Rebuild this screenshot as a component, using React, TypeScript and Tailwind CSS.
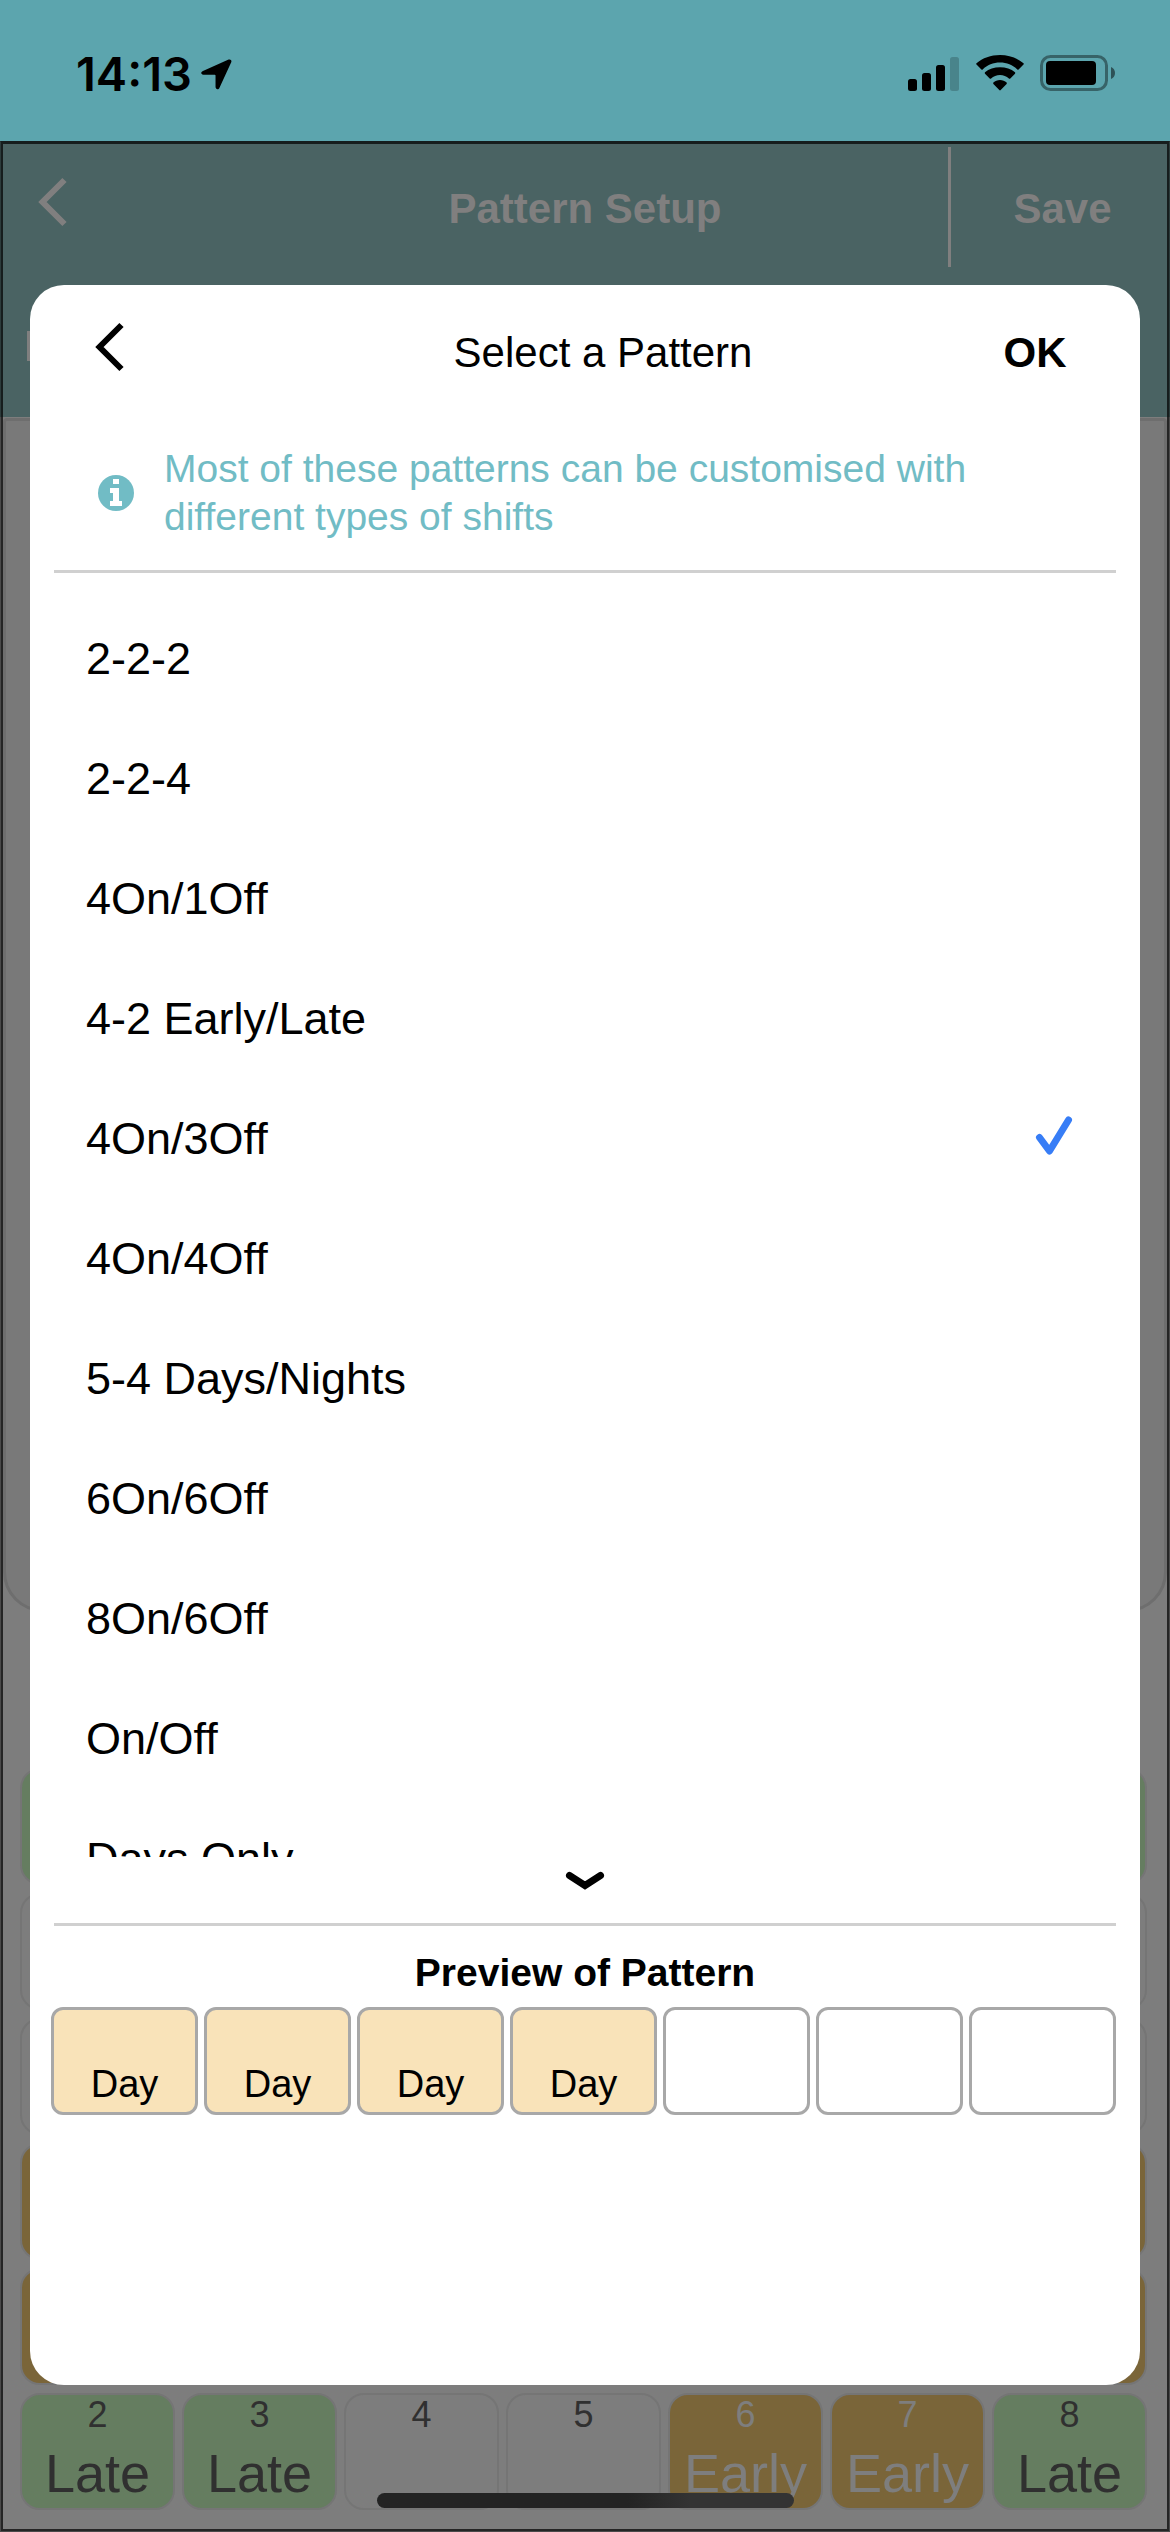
import { useState } from 'react';

const patterns = [
  '2-2-2',
  '2-2-4',
  '4On/1Off',
  '4-2 Early/Late',
  '4On/3Off',
  '4On/4Off',
  '5-4 Days/Nights',
  '6On/6Off',
  '8On/6Off',
  'On/Off',
  'Days Only',
];

const preview = ['Day', 'Day', 'Day', 'Day', '', '', ''];

type Shift = 'late' | 'early' | 'off';

const shiftTone: Record<Shift, string> = {
  late: 'bg-[#657d60] text-[#303030]',
  early: 'bg-[#7a6539] text-[#7e7e7e]',
  off: 'text-[#303030]',
};

const shiftLabel: Record<Shift, string> = { late: 'Late', early: 'Early', off: '' };

const pastWeeks: Shift[] = ['late', 'off', 'off', 'early', 'early'];

const currentWeek: { day: number; shift: Shift }[] = [
  { day: 2, shift: 'late' },
  { day: 3, shift: 'late' },
  { day: 4, shift: 'off' },
  { day: 5, shift: 'off' },
  { day: 6, shift: 'early' },
  { day: 7, shift: 'early' },
  { day: 8, shift: 'late' },
];

const cellBase = 'h-[117px] rounded-[20px] border-2 border-[#757575] text-center';

function BackIcon() {
  return (
    <svg className="h-[50px] w-[30px]" viewBox="0 0 30 50" fill="none" stroke="currentColor" strokeWidth="6">
      <path d="M26.500 3 4.500 25l22 22" />
    </svg>
  );
}

function StatusBar() {
  return (
    <div className="flex h-[141px] items-start justify-between bg-[#5ca5ae] pt-[48px] pr-[54px] pl-[76px] text-black">
      <div className="flex items-center gap-[9px]">
        <span className="font-['Inter',sans-serif] text-[47px] leading-[52px] font-semibold">14:13</span>
        <svg className="h-[31px] w-[31px]" viewBox="0 0 32 32" fill="currentColor">
          <path d="M28.500.6 2 12.400C-.6 13.600-.2 16.200 2.400 16.200H14.200c.6 0 .8.300.8.800V28.600c0 2.900 2.900 3.600 4.100 1L31.200 3.300C32 1.400 30.400-.2 28.500.6Z" />
        </svg>
      </div>
      <div className="flex items-center gap-[16px] pt-[7px]">
        <svg className="h-[36px] w-[52px]" viewBox="0 0 52 36" fill="currentColor">
          <rect x="0" y="24" width="9" height="12" rx="2.500" />
          <rect x="14" y="18" width="9" height="18" rx="2.500" />
          <rect x="28" y="10" width="9" height="26" rx="2.500" />
          <rect x="42" y="2" width="9" height="34" rx="2.500" opacity="0.2" />
        </svg>
        <svg className="h-[36px] w-[48px]" viewBox="0 0 48 36" fill="currentColor">
          <path d="M24 7.600c6.700 0 12.800 2.600 17.300 6.900.4.400.9.400 1.300 0l4.900-4.900c.4-.4.4-1 0-1.400C41.400 3.100 33.100 0 24 0S6.600 3.100.5 8.200c-.4.400-.4 1 0 1.400l4.900 4.900c.4.400.9.400 1.300 0C11.200 10.200 17.300 7.600 24 7.600Z" />
          <path d="M24 20c3.400 0 6.500 1.300 8.900 3.500.4.400 1 .4 1.400 0l4.700-4.800c.4-.4.4-1 0-1.400C35.100 13.700 29.800 12.300 24 12.300S12.900 13.700 9 17.300c-.4.400-.4 1 0 1.400l4.700 4.800c.4.400 1 .4 1.400 0C17.500 21.300 20.600 20 24 20Z" />
          <path d="M30.600 28.900c.4-.4.4-1 0-1.300C28.900 26 26.500 25 24 25s-4.900 1-6.600 2.600c-.4.300-.4.900 0 1.300l5.900 6.200c.4.400 1 .4 1.400 0Z" />
        </svg>
        <svg className="h-[36px] w-[76px]" viewBox="0 0 76 36">
          <rect x="1.500" y="1.500" width="65" height="33" rx="9" fill="none" stroke="#000" strokeOpacity="0.4" strokeWidth="3" />
          <rect x="6" y="6" width="50" height="24" rx="4" fill="#000" />
          <path d="M71 12v12c2.500-1 4-3.300 4-6s-1.500-5-4-6Z" fill="#000" fillOpacity="0.500" />
        </svg>
      </div>
    </div>
  );
}

function SetupPage() {
  return (
    <div className="bg-[#7d7d7d]">
      <header className="h-[276px] bg-[#4a6363] pt-[6px] text-[42px] leading-[48px] font-bold text-[#807f7f]">
        <div className="flex h-[120px]">
          <button className="flex w-[222px] items-center pb-[10px] pl-[38px]" aria-label="Back">
            <BackIcon />
          </button>
          <h1 className="flex flex-1 items-center justify-center pt-[4px]">Pattern Setup</h1>
          <button className="w-[222px] border-l-[3px] border-[#807f7f] pt-[4px] pl-[4px]">Save</button>
        </div>
        <div className="mt-[64px] ml-[27px] h-[30px] w-[6px] bg-[#807f7f]" />
      </header>

      <div className="mx-[3px] mt-px h-[1194px] rounded-t-[4px] rounded-b-[40px] border-[3px] border-[#6e6e6e] bg-[#797979]" />

      <div className="mt-[156px] flex flex-col gap-2 pr-[23px] pb-[22px] pl-[20px]">
        {pastWeeks.map((shift, week) => (
          <div key={week} className="grid grid-cols-7 gap-[7px]">
            {currentWeek.map(({ day }) => (
              <div key={day} className={`${cellBase} ${shiftTone[shift]}`} />
            ))}
          </div>
        ))}
        <div className="grid grid-cols-7 gap-[7px]">
          {currentWeek.map(({ day, shift }) => (
            <div key={day} className={`${cellBase} ${shiftTone[shift]}`}>
              <p className="text-[36px] leading-[40px]">{day}</p>
              <p className="mt-2 text-[54px] leading-[60px]">{shiftLabel[shift]}</p>
            </div>
          ))}
        </div>
      </div>
    </div>
  );
}

function PatternDialog() {
  const [selected, setSelected] = useState('4On/3Off');

  return (
    <section
      role="dialog"
      aria-label="Select a Pattern"
      className="absolute inset-x-[30px] top-[144px] bottom-[147px] flex flex-col rounded-[34px] bg-white text-black"
    >
      <header className="flex h-[135px] items-center text-[42px] leading-[48px]">
        <button className="flex w-[246px] pb-[12px] pl-[65px]" aria-label="Back">
          <BackIcon />
        </button>
        <h2 className="flex-1 text-center">Select a Pattern</h2>
        <button className="w-[210px] font-bold">OK</button>
      </header>

      <div className="mx-6 flex h-[153px] items-center gap-[30px] border-b-[3px] border-[#d0d0d0] pr-[60px] pb-[4px] pl-[44px] text-[#71bcc5]">
        <svg className="size-[36px] shrink-0" viewBox="0 0 36 36">
          <circle cx="18" cy="18" r="18" fill="currentColor" />
          <path d="M15 4h6v5h-6zM12 13h9v13h3v5H12v-5h3v-8h-3z" fill="#fff" />
        </svg>
        <p className="text-[39px] leading-[48px]">Most of these patterns can be customised with different types of shifts</p>
      </div>

      <ul className="mt-[26px] min-h-0 flex-1 overflow-y-auto [scrollbar-width:none]">
        {patterns.map((name) => (
          <li key={name}>
            <button
              className="flex h-[120px] w-full items-center justify-between pr-[66px] pl-[56px] text-[45px] leading-[52px]"
              aria-pressed={name === selected}
              onClick={() => setSelected(name)}
            >
              {name}
              {name === selected && (
                <svg
                  className="mb-[8px] h-[40px] w-[40px]"
                  viewBox="0 0 40 40"
                  fill="none"
                  stroke="#377df6"
                  strokeWidth="7"
                  strokeLinecap="round"
                  strokeLinejoin="round"
                >
                  <path d="M5.500 22.500 15.500 36 34.500 5" />
                </svg>
              )}
            </button>
          </li>
        ))}
      </ul>

      <div className="mx-6 flex h-[69px] justify-center border-b-[3px] border-[#d0d0d0] pt-[14px]">
        <svg className="h-[20px] w-[40px]" viewBox="0 0 40 20" fill="none" stroke="#000" strokeWidth="7" strokeLinecap="round">
          <path d="M4.500 4.500 20 14.500 35.500 4.500" />
        </svg>
      </div>

      <h3 className="pt-[23px] text-center text-[39px] leading-[48px] font-bold">Preview of Pattern</h3>
      <div className="mt-[10px] mr-6 mb-[270px] ml-[21px] grid grid-cols-7 gap-[6px]">
        {preview.map((label, i) => (
          <div
            key={i}
            className={`flex h-[108px] items-end justify-center rounded-[12px] border-[3px] border-[#a8a8a8] pb-[4px] text-[38px] leading-[48px] ${
              label ? 'bg-[#f9e3b9]' : 'bg-white'
            }`}
          >
            {label}
          </div>
        ))}
      </div>
    </section>
  );
}

export default function App() {
  return (
    <main className="font-['Liberation_Sans',Arial,sans-serif]">
      <StatusBar />
      <div className="relative">
        <SetupPage />
        {/* screen edge */}
        <div className="pointer-events-none absolute inset-0 border border-black/40 border-t-black/70">
          <div className="h-full border-2 border-black/70" />
        </div>
        <PatternDialog />
        <div className="absolute inset-x-0 bottom-[24px] mx-auto h-[15px] w-[417px] rounded-full bg-linear-to-r from-[#232323] from-60% to-[#333333] to-75%" />
      </div>
    </main>
  );
}
